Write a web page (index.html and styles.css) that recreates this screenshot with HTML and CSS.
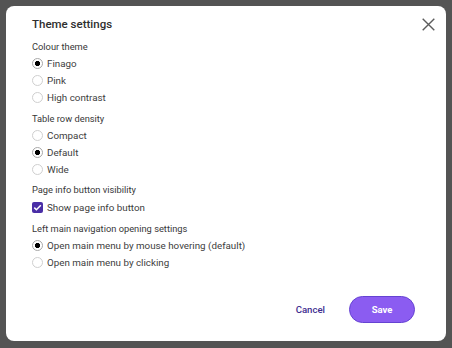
FILE: index.html
```html
<!DOCTYPE html>
<html lang="en">
<head>
<meta charset="utf-8">
<title>Theme settings</title>
<link rel="stylesheet" href="styles.css">
</head>
<body>
<div class="dialog">
  <h1 class="title">Theme settings</h1>
  <button class="close" aria-label="Close">
    <svg width="13" height="13" viewBox="0 0 13 13"><path d="M0.7 0.7L12.3 12.3M12.3 0.7L0.7 12.3" stroke="#5c5c5c" stroke-width="1.4" fill="none"/></svg>
  </button>
  <div class="groups">
    <div class="group">
      <div class="group-label">Colour theme</div>
      <div class="option"><span class="radio checked"></span>Finago</div>
      <div class="option"><span class="radio"></span>Pink</div>
      <div class="option"><span class="radio"></span>High contrast</div>
    </div>
    <div class="group">
      <div class="group-label">Table row density</div>
      <div class="option"><span class="radio"></span>Compact</div>
      <div class="option"><span class="radio checked"></span>Default</div>
      <div class="option"><span class="radio"></span>Wide</div>
    </div>
    <div class="group">
      <div class="group-label">Page info button visibility</div>
      <div class="option check-option"><span class="checkbox"><svg width="11" height="11" viewBox="0 0 11 11"><path d="M2.3 5.6L4.4 7.7L8.8 3.2" stroke="#fff" stroke-width="1.5" fill="none"/></svg></span>Show page info button</div>
    </div>
    <div class="group">
      <div class="group-label">Left main navigation opening settings</div>
      <div class="option"><span class="radio checked"></span>Open main menu by mouse hovering (default)</div>
      <div class="option"><span class="radio"></span>Open main menu by clicking</div>
    </div>
  </div>
  <div class="footer">
    <button class="cancel">Cancel</button>
    <button class="save">Save</button>
  </div>
</div>
</body>
</html>
```
FILE: styles.css
```css
html, body {
  margin: 0;
  padding: 0;
}
body {
  width: 452px;
  height: 348px;
  background: #545454;
  font-family: Roboto, "Liberation Sans", sans-serif;
  overflow: hidden;
}
.dialog {
  position: relative;
  margin: 6px;
  width: 440px;
  height: 335px;
  box-sizing: border-box;
  background: #fff;
  border-radius: 8px;
  padding: 10px 31px 18px 26px;
  display: flex;
  flex-direction: column;
}
.title {
  margin: 0 0 6px;
  font-size: 11.5px;
  font-weight: 500;
  line-height: 17px;
  color: #2e2e2e;
}
.close {
  position: absolute;
  top: 12px;
  right: 11px;
  width: 13px;
  height: 13px;
  padding: 0;
  border: 0;
  background: none;
  display: block;
}
.close svg { display: block; }
.groups {
  display: flex;
  flex-direction: column;
  gap: 4.5px;
}
.group {
  display: flex;
  flex-direction: column;
}
.group-label {
  font-size: 9.3px;
  line-height: 16px;
  color: #383838;
}
.option {
  height: 17px;
  display: flex;
  align-items: center;
  gap: 4px;
  font-size: 9.8px;
  color: #404040;
}
.check-option { margin-top: 1px; }
.radio {
  width: 11px;
  height: 11px;
  box-sizing: border-box;
  border: 1px solid #cfcfcf;
  border-radius: 50%;
  flex: none;
}
.radio.checked {
  border-color: #a8a8a8;
  background: radial-gradient(circle, #000 0 2.3px, #fff 2.9px);
}
.checkbox {
  width: 11px;
  height: 11px;
  border-radius: 2px;
  background: #4a2ea6;
  flex: none;
  display: block;
}
.checkbox svg { display: block; }
.footer {
  margin-top: auto;
  display: flex;
  justify-content: flex-end;
  align-items: center;
  gap: 24px;
}
.cancel {
  border: 0;
  background: none;
  padding: 0;
  font-family: inherit;
  font-size: 9.6px;
  font-weight: 500;
  color: #3d2c8f;
}
.save {
  width: 66px;
  height: 27px;
  box-sizing: border-box;
  border-radius: 14px;
  border: 1px solid #6543d2;
  background: #8b5cf1;
  color: #fff;
  font-family: inherit;
  font-size: 9.5px;
  font-weight: 700;
  padding: 0;
}
```
